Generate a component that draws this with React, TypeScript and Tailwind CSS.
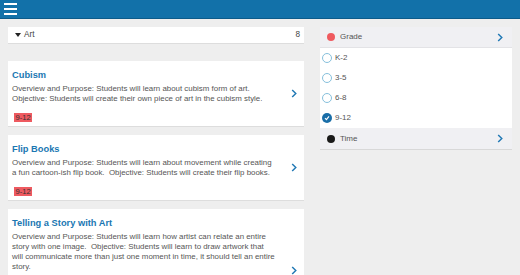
import React from "react";

function Chevron({ className = "" }: { className?: string }) {
  return (
    <svg viewBox="0 0 6 10" className={className} fill="none">
      <polyline points="1,1 5,5 1,9" stroke="#1f78b4" strokeWidth="1.6" />
    </svg>
  );
}

const lessons = [
  {
    title: "Cubism",
    text: "Overview and Purpose: Students will learn about cubism form of art. Objective: Students will create their own piece of art in the cubism style.",
    badge: "9-12",
  },
  {
    title: "Flip Books",
    text: "Overview and Purpose: Students will learn about movement while creating a fun cartoon-ish flip book.\u00a0 Objective: Students will create their flip books.",
    badge: "9-12",
  },
  {
    title: "Telling a Story with Art",
    text: "Overview and Purpose: Students will learn how artist can relate an entire story with one image.\u00a0 Objective: Students will learn to draw artwork that will communicate more than just one moment in time, it should tell an entire story.",
    badge: "9-12",
    tall: true,
  },
];

const grades = ["K-2", "3-5", "6-8", "9-12"];

export default function App() {
  return (
    <div
      className="w-[520px] h-[275px] overflow-hidden bg-[#eeeeee] text-[#555555] leading-none"
      style={{ fontFamily: '"Liberation Sans", Arial, sans-serif' }}
    >
      {/* top bar */}
      <div className="h-[19px] bg-[#1271a9] border-b border-[#0c5b8a] flex items-center pl-[4px]">
        <div className="flex flex-col gap-[3px]">
          <div className="w-[13px] h-[2px] bg-white" />
          <div className="w-[13px] h-[2px] bg-white" />
          <div className="w-[13px] h-[2px] bg-white" />
        </div>
      </div>

      <div className="flex gap-[16px] px-[8px] pt-[8px]">
        {/* left column */}
        <div className="w-[296px] flex flex-col">
          <div className="h-[17px] bg-white border-b border-[#dddddd] flex items-center pl-[7px] pr-[4px] text-[8.2px] text-[#444]">
            <svg viewBox="0 0 6 4" className="w-[6px] h-[4px] mr-[3px]">
              <polygon points="0,0 6,0 3,4" fill="#222" />
            </svg>
            <span>Art</span>
            <span className="ml-auto">8</span>
          </div>

          <div className="flex flex-col gap-[8px] mt-[17px]">
            {lessons.map((l) => (
              <div
                key={l.title}
                className={`bg-white border-b border-[#dddddd] flex pl-[4px] pr-[7px] ${
                  l.tall ? "min-h-[122px] items-start" : "items-center"
                }`}
              >
                <div className="w-[264px] pt-[8px] pb-[4px]">
                  <div className="text-[9.3px] font-bold leading-[12px] text-[#1a77b2]">{l.title}</div>
                  <p className="text-[7.9px] leading-[10px] mt-[3px] text-[#555]">{l.text}</p>
                  <div className="mt-[9px] ml-[2px] w-fit bg-[#ee5a60] text-[#333] text-[7.6px] leading-[9px] px-[1.5px] h-[9px]">
                    {l.badge}
                  </div>
                </div>
                <Chevron
                  className={`w-[6px] h-[9px] ml-auto ${l.tall ? "mt-[57px]" : ""}`}
                />
              </div>
            ))}
          </div>
        </div>

        {/* right column */}
        <div className="w-[192px] self-start bg-white border-b border-[#d8d8d8] text-[8px]">
          <div className="h-[21px] bg-[#f0f0f3] border-b border-[#e3e3e6] flex items-center pl-[7px] pr-[9px]">
            <div className="w-[8px] h-[8px] rounded-full bg-[#ef5a5f]" />
            <span className="ml-[5px]">Grade</span>
            <Chevron className="w-[6px] h-[9px] ml-auto" />
          </div>
          {grades.map((g) => (
            <div key={g} className="h-[20px] flex items-center pl-[2px]">
              {g === "9-12" ? (
                <div className="w-[10px] h-[10px] rounded-full bg-[#1a6ea8] flex items-center justify-center">
                  <svg viewBox="0 0 10 10" className="w-[8px] h-[8px]" fill="none">
                    <polyline points="2.5,5.2 4.3,7 7.5,3" stroke="white" strokeWidth="1.5" />
                  </svg>
                </div>
              ) : (
                <div className="w-[10px] h-[10px] rounded-full border border-[#86c0dc]" />
              )}
              <span className="ml-[3px]">{g}</span>
            </div>
          ))}
          <div className="h-[21px] bg-[#f0f0f3] flex items-center pl-[7px] pr-[9px]">
            <div className="w-[8px] h-[8px] rounded-full bg-[#1a1a1a]" />
            <span className="ml-[5px]">Time</span>
            <Chevron className="w-[6px] h-[9px] ml-auto" />
          </div>
        </div>
      </div>
    </div>
  );
}
